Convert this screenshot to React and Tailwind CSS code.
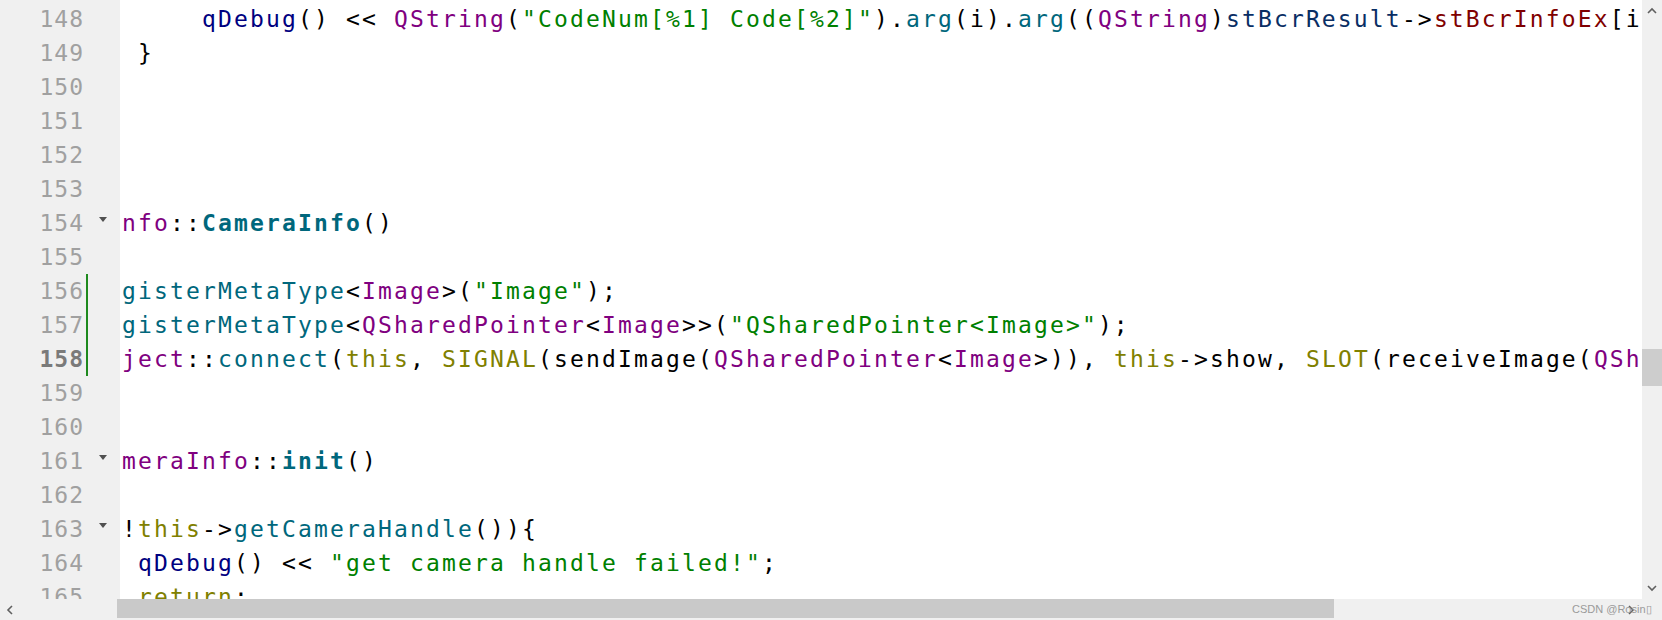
import React from "react";

const C = {
  k: "text-[#000000]",
  navy: "text-[#000080]",
  pur: "text-[#800080]",
  grn: "text-[#008000]",
  teal: "text-[#00677c]",
  olive: "text-[#808000]",
  blue: "text-[#092e64]",
  red: "text-[#800000]",
};

const lines = [
  { n: 148, t: [["     ", "k"], ["qDebug", "navy"], ["() << ", "k"], ["QString", "pur"], ["(", "k"], ["\"CodeNum[%1] Code[%2]\"", "grn"], [").", "k"], ["arg", "teal"], ["(i).", "k"], ["arg", "teal"], ["((", "k"], ["QString", "pur"], [")", "k"], ["stBcrResult", "blue"], ["->", "k"], ["stBcrInfoEx", "red"], ["[i].chCode);", "k"]] },
  { n: 149, t: [[" }", "k"]] },
  { n: 150, t: [] },
  { n: 151, t: [] },
  { n: 152, t: [] },
  { n: 153, t: [] },
  { n: 154, fold: true, t: [["nfo", "pur"], ["::", "k"], ["CameraInfo", "teal", true], ["()", "k"]] },
  { n: 155, t: [] },
  { n: 156, bar: true, t: [["gisterMetaType", "teal"], ["<", "k"], ["Image", "pur"], [">(", "k"], ["\"Image\"", "grn"], [");", "k"]] },
  { n: 157, bar: true, t: [["gisterMetaType", "teal"], ["<", "k"], ["QSharedPointer", "pur"], ["<", "k"], ["Image", "pur"], [">>(", "k"], ["\"QSharedPointer<Image>\"", "grn"], [");", "k"]] },
  { n: 158, bar: true, cur: true, t: [["ject", "pur"], ["::", "k"], ["connect", "teal"], ["(", "k"], ["this", "olive"], [", ", "k"], ["SIGNAL", "olive"], ["(sendImage(", "k"], ["QSharedPointer", "pur"], ["<", "k"], ["Image", "pur"], [">)), ", "k"], ["this", "olive"], ["->show, ", "k"], ["SLOT", "olive"], ["(receiveImage(", "k"], ["QSharedPointer", "pur"], ["<", "k"], ["Image", "pur"], [">)));", "k"]] },
  { n: 159, t: [] },
  { n: 160, t: [] },
  { n: 161, fold: true, t: [["meraInfo", "pur"], ["::", "k"], ["init", "teal", true], ["()", "k"]] },
  { n: 162, t: [] },
  { n: 163, fold: true, t: [["!", "k"], ["this", "olive"], ["->", "k"], ["getCameraHandle", "teal"], ["()){", "k"]] },
  { n: 164, t: [[" ", "k"], ["qDebug", "navy"], ["() << ", "k"], ["\"get camera handle failed!\"", "grn"], [";", "k"]] },
  { n: 165, t: [[" ", "k"], ["return", "olive"], [";", "k"]] },
];

const mono = { fontFamily: '"DejaVu Sans Mono", "Liberation Mono", monospace' };

function Chevron({ dir }) {
  const pts = {
    up: "1,7 5,3 9,7",
    down: "1,3 5,7 9,3",
    left: "7,1 3,5 7,9",
    right: "3,1 7,5 3,9",
  }[dir];
  return (
    <svg width="10" height="10" viewBox="0 0 10 10">
      <polyline points={pts} fill="none" stroke="#606060" strokeWidth="1.6" />
    </svg>
  );
}

export default function App() {
  return (
    <div className="relative w-[1662px] h-[620px] bg-white overflow-hidden flex flex-col" style={mono}>
      <div className="flex h-[599px]">
        <div className="flex flex-1 min-w-0 overflow-hidden">
          <div className="w-[120px] shrink-0 bg-[#f0f0f0] pt-[2px]">
            {lines.map((l) => (
              <div key={l.n} className="flex h-[34px] items-stretch">
                <div
                  className={`w-[86px] text-right text-[23px] leading-[34px] tracking-[1px] pr-[2px] ${
                    l.cur ? "text-[#7a7a7a] font-bold" : "text-[#a0a0a0]"
                  }`}
                >
                  {l.n}
                </div>
                <div className={`w-[2px] ${l.bar ? "bg-[#1e8a1e]" : ""}`} />
                <div className="flex-1 flex items-center pl-[11px]">
                  {l.fold && (
                    <svg width="8" height="5" viewBox="0 0 8 5" className="mb-[8px]">
                      <polygon points="0,0 8,0 4,5" fill="#505050" />
                    </svg>
                  )}
                </div>
              </div>
            ))}
          </div>
          <div className="flex-1 min-w-0 overflow-hidden pt-[2px] pl-[2px]">
            {lines.map((l) => (
              <div key={l.n} className="h-[34px] leading-[34px] text-[23px] tracking-[2.15px] whitespace-pre">
                {l.t.map(([s, c, b], i) => (
                  <span key={i} className={`${C[c]} ${b ? "font-bold" : ""}`}>
                    {s}
                  </span>
                ))}
              </div>
            ))}
          </div>
        </div>
        <div className="w-[20px] shrink-0 bg-[#f0f0f0] flex flex-col">
          <div className="h-[22px] flex items-center justify-center">
            <Chevron dir="up" />
          </div>
          <div className="flex-1">
            <div className="mt-[327px] h-[37px] bg-[#cdcdcd]" />
          </div>
          <div className="h-[22px] flex items-center justify-center">
            <Chevron dir="down" />
          </div>
        </div>
      </div>
      <div className="h-[21px] bg-[#f0f0f0] flex">
        <div className="w-[20px] flex items-center justify-center">
          <Chevron dir="left" />
        </div>
        <div className="flex-1 flex">
          <div className="ml-[97px] w-[1217px] h-[19px] bg-[#c9c9c9]" />
        </div>
        <div className="w-[22px] flex items-center justify-center">
          <Chevron dir="right" />
        </div>
        <div className="w-[20px]" />
      </div>
      <div
        className="absolute left-[1572px] top-[599px] h-[21px] flex items-center text-[11px] text-[#9a9a9a]"
        style={{ fontFamily: '"Liberation Sans", Arial, sans-serif' }}
      >
        CSDN @Rosin▯
      </div>
    </div>
  );
}
